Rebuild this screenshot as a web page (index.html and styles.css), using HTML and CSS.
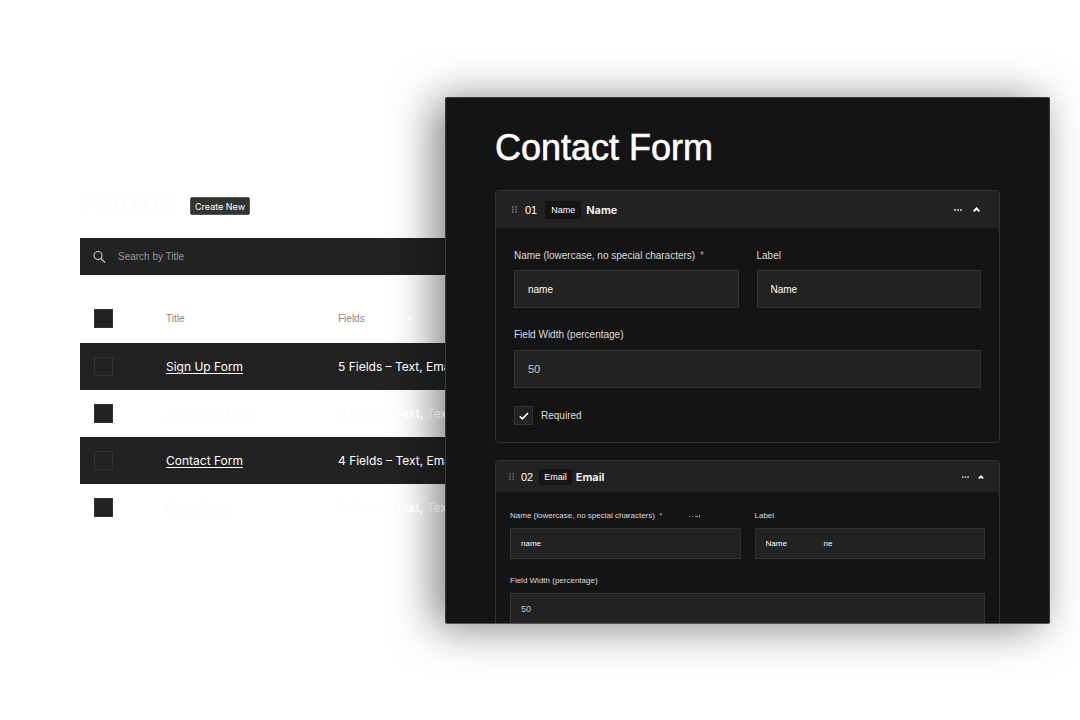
FILE: index.html
```html
<!DOCTYPE html>
<html lang="en">
<head>
    <meta charset="UTF-8">
    <meta name="viewport" content="width=device-width, initial-scale=1.0">
    <title>Forms</title>
    <link rel="stylesheet" href="styles.css">
</head>
<body>
    <main class="page">
        <section class="list">
            <header class="list-header">
                <h1>Forms</h1>
                <button type="button" class="create">Create New</button>
            </header>
            <div class="search">
                <svg width="14" height="14" viewBox="0 0 14 14" fill="none" stroke="#ccc" stroke-width="1.1" aria-hidden="true">
                    <circle cx="5" cy="5.5" r="4"/>
                    <path d="M8 8.5L12 12.5"/>
                </svg>
                <input type="search" placeholder="Search by Title" aria-label="Search by Title">
            </div>
            <table class="forms">
                <thead>
                    <tr>
                        <th class="col-check"><input type="checkbox" class="check" aria-label="Select all"></th>
                        <th class="col-title">Title</th>
                        <th class="col-fields"><span class="sort">Fields
                            <svg width="6" height="5" viewBox="0 0 6 5" fill="none" stroke="#fff" stroke-width="1.5" aria-hidden="true"><path d="M0.5 1L3 3.5L5.5 1"/></svg>
                        </span></th>
                    </tr>
                </thead>
                <tbody>
                    <tr class="dark">
                        <td><input type="checkbox" class="check" aria-label="Select Sign Up Form"></td>
                        <td><a href="#">Sign Up Form</a></td>
                        <td>5 Fields – Text, Ema</td>
                    </tr>
                    <tr class="ghost">
                        <td><input type="checkbox" class="check" aria-label="Select Advanced Form"></td>
                        <td><a href="#">Advanced Form</a></td>
                        <td>9 Fields – <b>Text,</b> <span>Tex</span></td>
                    </tr>
                    <tr class="dark">
                        <td><input type="checkbox" class="check" aria-label="Select Contact Form"></td>
                        <td><a href="#">Contact Form</a></td>
                        <td>4 Fields – Text, Ema</td>
                    </tr>
                    <tr class="ghost">
                        <td><input type="checkbox" class="check" aria-label="Select Basic Form"></td>
                        <td><a href="#">Basic Form</a></td>
                        <td>5 Fields – <b>Text,</b> <span>Tex</span></td>
                    </tr>
                </tbody>
            </table>
        </section>

        <section class="drawer">
            <h2>Contact Form</h2>

            <article class="block">
                <header class="block-header">
                    <svg class="grip" width="5" height="7" viewBox="0 0 6 8" fill="#777" aria-hidden="true">
                        <path d="M0 0h2v2H0zM4 0h2v2H4zM0 3h2v2H0zM4 3h2v2H4zM0 6h2v2H0zM4 6h2v2H4z"/>
                    </svg>
                    <span class="num">01</span>
                    <span class="tag">Name</span>
                    <h3>Name</h3>
                    <button type="button" class="icon more" aria-label="More">
                        <svg width="8" height="2" viewBox="0 0 8 2" fill="#aaa"><path d="M0 0h2v2H0zM3 0h2v2H3zM6 0h2v2H6z"/></svg>
                    </button>
                    <button type="button" class="icon" aria-label="Collapse">
                        <svg width="7" height="5" viewBox="0 0 7 5" fill="none" stroke="#fff" stroke-width="2"><path d="M0.7 4.4L3.5 1.4L6.3 4.4"/></svg>
                    </button>
                </header>
                <div class="block-body">
                    <div class="field">
                        <label for="name1">Name (lowercase, no special characters) <span class="star">*</span></label>
                        <input type="text" id="name1" value="name">
                    </div>
                    <div class="field">
                        <label for="label1">Label</label>
                        <input type="text" id="label1" value="Name">
                    </div>
                    <div class="field wide">
                        <label for="width1">Field Width (percentage)</label>
                        <input type="text" id="width1" class="number" value="50">
                    </div>
                    <div class="required">
                        <input type="checkbox" id="required1" class="check" checked>
                        <label for="required1">Required</label>
                    </div>
                </div>
            </article>

            <article class="block small">
                <header class="block-header">
                    <svg class="grip" width="5" height="7" viewBox="0 0 6 8" fill="#666" aria-hidden="true">
                        <path d="M0 0h2v2H0zM4 0h2v2H4zM0 3h2v2H0zM4 3h2v2H4zM0 6h2v2H0zM4 6h2v2H4z"/>
                    </svg>
                    <span class="num">02</span>
                    <span class="tag">Email</span>
                    <h3>Email</h3>
                    <button type="button" class="icon more" aria-label="More">
                        <svg width="7" height="2" viewBox="0 0 8 2" fill="#aaa"><path d="M0 0h2v2H0zM3 0h2v2H3zM6 0h2v2H6z"/></svg>
                    </button>
                    <button type="button" class="icon" aria-label="Collapse">
                        <svg width="6" height="4" viewBox="0 0 7 5" fill="none" stroke="#fff" stroke-width="2"><path d="M0.7 4.4L3.5 1.4L6.3 4.4"/></svg>
                    </button>
                </header>
                <div class="block-body">
                    <div class="field">
                        <label for="name2">Name (lowercase, no special characters) <span class="star">*</span>
                            <svg class="specks" width="12" height="3" viewBox="0 0 12 3" fill="#999" aria-hidden="true"><path d="M0 1h1v1H0zM3 1h1v1H3zM6 1h3v1H6zM10 0h1v2l-1 1z"/></svg>
                        </label>
                        <input type="text" id="name2" value="name">
                    </div>
                    <div class="field">
                        <label for="label2">Label</label>
                        <div class="input-wrap">
                            <input type="text" id="label2" value="Name">
                            <span class="stray">ne</span>
                        </div>
                    </div>
                    <div class="field wide">
                        <label for="width2">Field Width (percentage)</label>
                        <input type="text" id="width2" class="number" value="50">
                    </div>
                </div>
            </article>
        </section>
    </main>
</body>
</html>
```
FILE: styles.css
```css
/* General Styles */
* {
    box-sizing: border-box;
}

body {
    margin: 0;
    background-color: #fff;
    color: #fff;
    font-family: "Liberation Sans", Arial, sans-serif;
    font-size: 12px;
}

h1,
h2,
h3 {
    margin: 0;
    font-weight: 400;
}

input,
button {
    font-family: inherit;
    color: inherit;
}

.page {
    display: grid;
    grid-template-columns: 365fr 605fr;
    padding: 97px 30px 96px 80px;
    height: 100vh;
}

/* Forms List */
.list {
    position: relative;
    z-index: 1;
    overflow: hidden;
    padding-top: 84px;
}

.list-header {
    display: flex;
    align-items: center;
    gap: 12px;
    height: 44px;
    margin-bottom: 13px;
}

.list-header h1 {
    width: 98px;
    font-size: 34px;
    color: #fdfdfd;
}

.create {
    height: 18px;
    margin-top: 6px;
    padding: 0 4px;
    border: 1px solid #555;
    border-radius: 2px;
    background-color: #333;
    font-family: Inter, sans-serif;
    font-size: 9px;
    white-space: nowrap;
}

.search {
    display: flex;
    align-items: center;
    gap: 11px;
    height: 37px;
    padding-left: 13px;
    background: linear-gradient(to right, #222 85%, #191919);
}

.search input {
    flex: 1;
    min-width: 0;
    padding: 0;
    border: none;
    outline: none;
    background: none;
    font-size: 10px;
}

.search input::placeholder {
    color: #999;
}

.forms {
    width: 100%;
    margin-top: 19px;
    border-collapse: collapse;
    table-layout: fixed;
    white-space: nowrap;
}

.forms th {
    height: 49px;
    padding: 0;
    font-size: 10px;
    font-weight: 400;
    text-align: left;
    color: #888;
}

.forms td {
    height: 47px;
    padding: 0;
    font-family: Inter, sans-serif;
}

.forms th:first-child,
.forms td:first-child {
    padding-left: 14px;
}

.col-check {
    width: 86px;
}

.col-title {
    width: 172px;
}

.sort {
    display: flex;
    align-items: center;
    gap: 42px;
}

.forms a {
    color: inherit;
    text-underline-offset: 2px;
}

.dark {
    background: linear-gradient(to right, #222 85%, #191919);
}

.ghost {
    color: #fbfbfb;
}

.ghost b {
    font-weight: 500;
    color: #fff;
}

.ghost span {
    color: #ddd;
}

/* Checkbox */
.check {
    display: block;
    appearance: none;
    width: 19px;
    height: 19px;
    margin: 0;
    border: 1px solid #333;
    background-color: #222;
}

.check:checked {
    background: #222 url("data:image/svg+xml,%3Csvg xmlns='http://www.w3.org/2000/svg' viewBox='0 0 10 8' fill='none' stroke='white' stroke-width='1.6'%3E%3Cpath d='M0.8 4.2L3.4 6.8L9 1'/%3E%3C/svg%3E") center / 10px 8px no-repeat;
}

/* Drawer */
.drawer {
    overflow: hidden;
    min-height: 0;
    padding: 30px 49px 0;
    border: 1px solid #3a3a3a;
    border-bottom-color: #555;
    border-radius: 2px;
    background-color: #141414;
    box-shadow: -10px 3px 44px rgba(0, 0, 0, 0.5);
}

.drawer h2 {
    margin-bottom: 22px;
    font-size: 36px;
    line-height: 40px;
    -webkit-text-stroke: 0.6px #fff;
}

/* Field Blocks */
.block {
    margin-bottom: 17px;
    border: 1px solid #333;
    border-radius: 4px;
}

.block-header {
    display: flex;
    align-items: center;
    height: 37px;
    padding: 0 19px 0 16px;
    background-color: #222;
}

.num {
    margin: 0 8px;
    font-size: 11px;
}

.tag {
    margin-right: 5px;
    padding: 0 6px;
    border-radius: 2px;
    background-color: #141414;
    font-size: 9px;
    line-height: 18px;
}

.block h3 {
    font-family: Inter, sans-serif;
    font-size: 11px;
    font-weight: 600;
}

.icon {
    display: flex;
    padding: 0;
    border: none;
    background: none;
}

.more {
    margin: 0 11px 0 auto;
}

.block-body {
    display: grid;
    grid-template-columns: 1fr 1fr;
    gap: 20px 18px;
    padding: 21px 18px 17px;
}

.field label {
    display: block;
    margin-bottom: 7px;
    font-size: 10px;
    line-height: 14px;
    color: #ddd;
}

.wide label {
    margin-bottom: 8px;
}

.star {
    margin-left: 2px;
    color: #aaa;
}

.field input {
    display: block;
    width: 100%;
    height: 38px;
    padding: 0 13px;
    border: 1px solid #333;
    background-color: #222;
    font-size: 10px;
}

.field .number {
    color: #ccc;
    font-size: 11px;
}

.wide {
    grid-column: 1 / -1;
}

.required {
    display: flex;
    align-items: center;
    gap: 8px;
    margin-top: -2px;
    font-size: 10px;
    color: #ddd;
}

/* Compact Block */
.small .block-header {
    height: 31px;
    padding: 0 15px 0 13px;
}

.small .num {
    margin: 0 6px 0 7px;
}

.small .tag {
    margin-right: 4px;
    padding: 0 5px;
    line-height: 16px;
}

.small .block-body {
    gap: 16px 14px;
    padding: 18px 14px;
}

.small .field label {
    margin-bottom: 6px;
    font-size: 8px;
    line-height: 12px;
}

.small .field input {
    height: 31px;
    padding: 0 10px;
    font-size: 8px;
}

.small .field .number {
    font-size: 9px;
}

.small .more {
    margin-right: 9px;
}

.specks {
    margin-left: 24px;
}

.input-wrap {
    position: relative;
}

.stray {
    position: absolute;
    left: 69px;
    top: 0;
    font-size: 8px;
    line-height: 31px;
}
```
